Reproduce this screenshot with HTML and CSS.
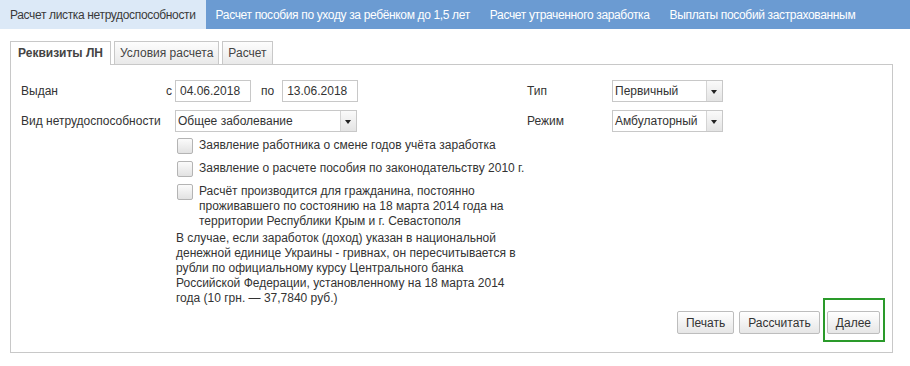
FILE: index.html
```html
<!DOCTYPE html>
<html>
<head>
    <link rel="stylesheet" href="styles.css">
    <title>Расчет листка нетрудоспособности</title>
</head>
<body>
    <div class="topnav">
        <a class="topnav-item active">Расчет листка нетрудоспособности</a>
        <a class="topnav-item">Расчет пособия по уходу за ребёнком до 1,5 лет</a>
        <a class="topnav-item">Расчет утраченного заработка</a>
        <a class="topnav-item">Выплаты пособий застрахованным</a>
    </div>

    <div class="content">
        <div class="tabs">
            <div class="tab active">Реквизиты ЛН</div>
            <div class="tab">Условия расчета</div>
            <div class="tab">Расчет</div>
        </div>

        <div class="panel">
            <div class="form">
                <div class="left">
                    <div class="row">
                        <div class="label split"><span>Выдан</span><span>с</span></div>
                        <div class="field">
                            <div class="input">04.06.2018</div>
                            <span class="sep">по</span>
                            <div class="input">13.06.2018</div>
                        </div>
                    </div>
                    <div class="row">
                        <div class="label">Вид нетрудоспособности</div>
                        <div class="select wide">
                            <span class="select-text">Общее заболевание</span>
                            <span class="select-btn"></span>
                        </div>
                    </div>
                    <div class="checks">
                        <label class="check"><span class="box"></span><span>Заявление работника о смене годов учёта заработка</span></label>
                        <label class="check"><span class="box"></span><span>Заявление о расчете пособия по законодательству 2010 г.</span></label>
                        <label class="check tall"><span class="box"></span><span>Расчёт производится для гражданина, постоянно проживавшего по состоянию на 18 марта 2014 года на территории Республики Крым и г. Севастополя</span></label>
                        <p class="note">В случае, если заработок (доход) указан в национальной денежной единице Украины - гривнах, он пересчитывается в рубли по официальному курсу Центрального банка Российской Федерации, установленному на 18 марта 2014 года (10 грн. — 37,7840 руб.)</p>
                    </div>
                </div>
                <div class="right">
                    <div class="row">
                        <div class="label short">Тип</div>
                        <div class="select narrow">
                            <span class="select-text">Первичный</span>
                            <span class="select-btn"></span>
                        </div>
                    </div>
                    <div class="row">
                        <div class="label short">Режим</div>
                        <div class="select narrow">
                            <span class="select-text">Амбулаторный</span>
                            <span class="select-btn"></span>
                        </div>
                    </div>
                </div>
            </div>
            <div class="buttons">
                <button class="btn">Печать</button>
                <button class="btn">Рассчитать</button>
                <span class="highlight"><button class="btn">Далее</button></span>
            </div>
        </div>
    </div>
</body>
</html>
```

FILE: styles.css
```css
body {
    margin: 0;
    font-family: "Liberation Sans", Arial, sans-serif;
    font-size: 12px;
    color: #333;
    background: #fff;
}
.topnav {
    display: flex;
    height: 29px;
    background: #6b9bd2;
}
.topnav-item {
    display: flex;
    align-items: center;
    padding: 0 10px;
    color: #fff;
    letter-spacing: -0.35px;
    white-space: nowrap;
}
.topnav-item.active {
    background: #dce9f7;
    color: #3a3a3a;
}
.content {
    padding: 12px 17px 0 10px;
}
.tabs {
    display: flex;
    gap: 3px;
}
.tab {
    height: 22px;
    line-height: 22px;
    padding: 0 5px;
    border: 1px solid #c8c8c8;
    border-bottom: none;
    background: linear-gradient(#fdfdfd, #e9e9e9);
    color: #444;
}
.tab.active {
    background: #fff;
    font-weight: bold;
    padding: 0 7px;
    height: 23px;
    margin-bottom: -1px;
    position: relative;
}
.panel {
    border: 1px solid #c8c8c8;
    padding: 15px 12px 18px 10px;
}
.form {
    display: flex;
}
.left {
    width: 506px;
}
.row {
    display: flex;
    align-items: center;
    height: 22px;
    margin-bottom: 8px;
}
.label {
    width: 154px;
    color: #333;
}
.label.split {
    display: flex;
    justify-content: space-between;
    padding-right: 3px;
    width: 151px;
}
.label.short {
    width: 85px;
}
.field {
    display: flex;
    align-items: center;
}
.input {
    width: 68px;
    height: 20px;
    line-height: 20px;
    padding: 0 2px 0 4px;
    border: 1px solid #c8c8c8;
}
.sep {
    margin: 0 8px 0 10px;
}
.select {
    display: flex;
    height: 20px;
    border: 1px solid #c8c8c8;
}
.select.wide {
    width: 180px;
}
.select.narrow {
    width: 109px;
}
.select-text {
    flex: 1;
    line-height: 20px;
    padding-left: 2px;
}
.select-btn {
    width: 15px;
    border-left: 1px solid #d4d4d4;
    background: linear-gradient(#fafafa, #e4e4e4);
    position: relative;
}
.select-btn::after {
    content: "";
    position: absolute;
    left: 4px;
    top: 9px;
    border-left: 3px solid transparent;
    border-right: 3px solid transparent;
    border-top: 4px solid #222;
}
.checks {
    margin-left: 155px;
    margin-top: -2px;
    width: 350px;
}
.check {
    display: flex;
    align-items: flex-start;
    line-height: 15px;
    margin-bottom: 7px;
}
.check .box {
    flex: none;
    width: 14px;
    height: 14px;
    margin: 0 6px 0 1px;
    border: 1px solid #b4b4b4;
    border-radius: 2px;
    background: linear-gradient(#fbfbfb, #e2e2e2);
}
.check.tall {
    margin-bottom: 2px;
}
.note {
    margin: 0;
    line-height: 15px;
}
.buttons {
    display: flex;
    justify-content: flex-end;
    align-items: center;
    gap: 5px;
    margin-top: 5px;
}
.btn {
    height: 23px;
    padding: 0 8px;
    font-family: "Liberation Sans", Arial, sans-serif;
    font-size: 12px;
    color: #333;
    border: 1px solid #bdbdbd;
    border-radius: 2px;
    background: linear-gradient(#ffffff, #e6e6e6);
}
.highlight {
    position: relative;
    display: inline-flex;
    margin-left: 2px;
}
.highlight::after {
    content: "";
    position: absolute;
    top: -13px;
    left: -4px;
    right: -5px;
    bottom: -8px;
    border: 2px solid #2a9a2a;
}
```
